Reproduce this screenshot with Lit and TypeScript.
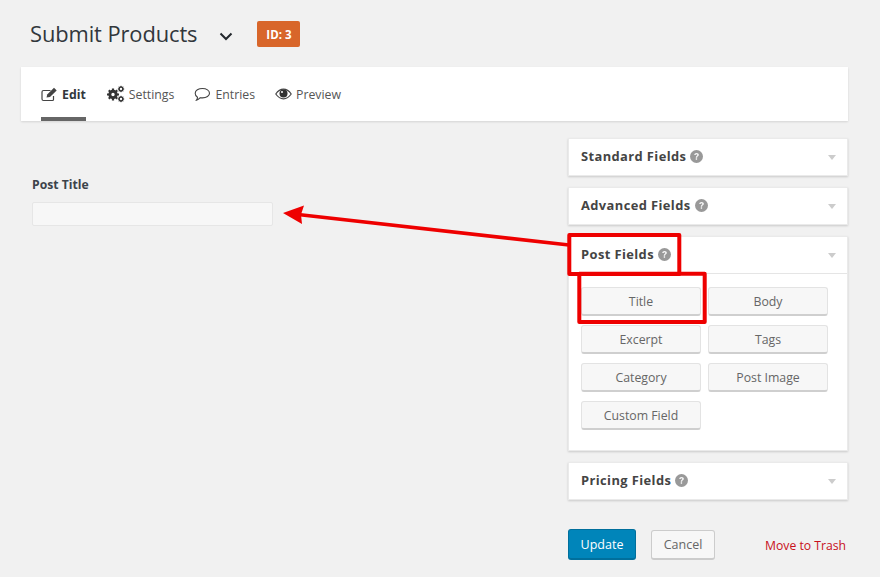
import { LitElement, html, css, svg } from "lit";
import { customElement } from "lit/decorators.js";

const help = svg`<svg class="help" viewBox="0 0 12 12" width="13" height="13"><circle cx="6" cy="6" r="6" fill="#999"/><path d="M3.900 4.700c0-1.300 1-2 2.150-2 1.200 0 2.100.7 2.100 1.750 0 1.500-1.600 1.400-1.600 2.650H5.300c0-1.800 1.450-1.700 1.450-2.550 0-.4-.3-.7-.75-.7-.5 0-.8.350-.8.850zM5.300 7.700h1.250v1.400H5.300z" fill="#f8f8f8"/></svg>`;

@customElement("app-root")
export class AppRoot extends LitElement {
  static styles = css`
    :host { display: block; width: 880px; height: 577px; position: relative; overflow: hidden; background: #f1f1f1; font-family: "Open Sans", "Noto Sans", sans-serif; color: #444; }
    .header { display: flex; align-items: center; height: 67px; padding: 0 0 0 30px; box-sizing: border-box; }
    h1 { margin: 0; font-size: 21.900px; font-weight: 400; color: #32373c; line-height: 30px; letter-spacing: -0.1px; }
    .chev { margin-left: 22px; margin-top: 5px; }
    .badge { margin-left: 24px; background: #d8662a; color: #fff; font-size: 11.500px; font-weight: 700; border-radius: 2px; width: 43px; height: 26px; display: flex; align-items: center; justify-content: center; margin-top: 1px; box-sizing: border-box; }
    .tabs { margin: 0 32px 0 21px; height: 54px; background: #fff; box-shadow: 0 1px 2px rgba(0,0,0,.12); display: flex; padding-left: 20px; gap: 20px; box-sizing: border-box; }
    .tab { display: flex; align-items: center; gap: 4px; height: 54px; box-sizing: border-box; padding-bottom: 0; font-size: 12.300px; color: #555; }
    .tab.on { font-weight: 700; color: #32373c; border-bottom: 4px solid #666; padding-top: 4px; }
    .body { display: flex; justify-content: space-between; padding: 17px 32px 0 32px; }
    .form { width: 241px; padding-top: 39px; }
    .label { font-size: 12.200px; font-weight: 700; color: #3c434a; line-height: 16px; }
    .input { margin-top: 9px; height: 24px; background: #f7f7f7; border: 1px solid #e6e6e6; border-radius: 2px; box-sizing: border-box; }
    .side { width: 280px; margin-left: auto; display: flex; flex-direction: column; gap: 11px; }
    .panel { background: #fff; box-shadow: 0 1px 2px rgba(0,0,0,.16); border: 1px solid #eaeaea; box-sizing: border-box; }
    .phead { height: 36px; display: flex; align-items: center; padding-left: 12px; padding-right: 11px; font-size: 12.900px; letter-spacing: .4px; font-weight: 700; color: #444; gap: 4px; box-sizing: border-box; }
    .phead > span { position: relative; top: -1px; }
    .open .phead { border-bottom: 1px solid #e5e5e5; height: 37px; }
    .tri { margin-left: auto; width: 0; height: 0; border-left: 4.500px solid transparent; border-right: 4.500px solid transparent; border-top: 5px solid #ccc; }
    .help { flex: none; margin-top: -1px; }
    .grid { display: grid; grid-template-columns: 120px 120px; column-gap: 7px; row-gap: 9px; padding: 13px 12px 20px 12px; }
    .fbtn { height: 29px; background: #f7f7f7; border: 1px solid #e3e3e3; border-bottom: 2px solid #cfcfcf; border-radius: 3px; box-sizing: border-box; display: flex; align-items: center; justify-content: center; font-size: 12.300px; color: #666; }
    .actions { display: flex; align-items: center; margin-top: 18px; }
    .update { width: 68px; height: 31px; background: #0085ba; border: 1px solid #006f9c; border-bottom-width: 2px; border-radius: 3px; color: #fff; font-size: 12.500px; display: flex; align-items: center; justify-content: center; box-sizing: border-box; }
    .cancel { margin-left: 15px; width: 64px; height: 30px; background: #f7f7f7; border: 1px solid #ccc; border-bottom: 2px solid #ccc; border-radius: 3px; color: #666; font-size: 12.500px; display: flex; align-items: center; justify-content: center; box-sizing: border-box; }
    .trash { margin-left: auto; color: #c8101b; font-size: 12.200px; margin-top: 2px; margin-right: 2px; }
    .overlay { position: absolute; left: 0; top: 0; pointer-events: none; }
  `;

  render() {
    return html`
      <div class="header">
        <h1>Submit Products</h1>
        <svg class="chev" width="14" height="9" viewBox="0 0 14 9"><path d="M1.500 1.500 7 7l5.500-5.500" fill="none" stroke="#23282d" stroke-width="2"/></svg>
        <div class="badge">ID: 3</div>
      </div>
      <div class="tabs">
        <div class="tab on">
          <svg width="17" height="15" viewBox="0 0 17 15"><path d="M12.500 9v3.500a1 1 0 0 1-1 1h-9a1.500 1.500 0 0 1-1.500-1.500V5a1.500 1.500 0 0 1 1.500-1.500h7" fill="none" stroke="#444" stroke-width="1.200"/><path d="M5.500 10.500l.7-3L13 .8l2.700 2.700L9 10z" fill="#444"/></svg>
          <span>Edit</span>
        </div>
        <div class="tab">
          <svg width="19" height="18" viewBox="0 0 19 18"><g fill="none" stroke="#333"><circle cx="7" cy="9.500" r="3.200" stroke-width="3"/><path d="M7 3.500v2M7 13.500v2M1 9.500h2M11 9.500h2M2.800 5.300l1.400 1.400M9.800 12.300l1.400 1.400M2.800 13.700l1.400-1.400M9.800 6.700l1.400-1.400" stroke-width="2.200"/><circle cx="15" cy="4" r="1.900" stroke-width="1.500"/><path d="M15 .8v1M15 6.200v1M11.800 4h1M17.200 4h1M12.800 1.800l.7.7M16.500 5.500l.7.7M12.800 6.200l.7-.7M16.500 2.500l.7-.7" stroke-width="1"/><circle cx="15" cy="14" r="1.900" stroke-width="1.500"/><path d="M15 10.800v1M15 16.200v1M11.800 14h1M17.200 14h1M12.800 11.800l.7.7M16.500 15.500l.7.7M12.800 16.200l.7-.7M16.500 12.500l.7-.7" stroke-width="1"/></g></svg>
          <span>Settings</span>
        </div>
        <div class="tab">
          <svg width="17" height="15" viewBox="0 0 17 15"><path d="M8.500 1.500c4 0 7 2 7 4.700s-3 4.700-7 4.700c-.8 0-1.500-.1-2.200-.2C5.300 11.800 4 12.900 2.500 13.200c.6-.8 1-1.700 1-2.900C2 9.400 1.200 8 1.200 6.200 1.200 3.500 4.500 1.500 8.500 1.500z" fill="none" stroke="#444" stroke-width="1.100"/></svg>
          <span>Entries</span>
        </div>
        <div class="tab">
          <svg width="17" height="12" viewBox="0 0 17 12"><path d="M.8 6C3 2.800 5.500 1.200 8.500 1.200S14 2.800 16.200 6C14 9.200 11.500 10.800 8.500 10.800S3 9.200.8 6z" fill="none" stroke="#444" stroke-width="1.200"/><circle cx="8.500" cy="5.500" r="4" fill="#333"/><circle cx="7" cy="4" r="1" fill="#fff"/></svg>
          <span>Preview</span>
        </div>
      </div>
      <div class="body">
        <div class="form">
          <div class="label">Post Title</div>
          <div class="input"></div>
        </div>
        <div class="side">
          <div class="panel"><div class="phead"><span>Standard Fields</span>${help}<i class="tri"></i></div></div>
          <div class="panel"><div class="phead"><span>Advanced Fields</span>${help}<i class="tri"></i></div></div>
          <div class="panel open">
            <div class="phead"><span>Post Fields</span>${help}<i class="tri"></i></div>
            <div class="grid">
              ${["Title", "Body", "Excerpt", "Tags", "Category", "Post Image", "Custom Field"].map((t) => html`<div class="fbtn">${t}</div>`)}
            </div>
          </div>
          <div class="panel"><div class="phead"><span>Pricing Fields</span>${help}<i class="tri"></i></div></div>
          <div class="actions">
            <div class="update">Update</div>
            <div class="cancel">Cancel</div>
            <div class="trash">Move to Trash</div>
          </div>
        </div>
      </div>
      <svg class="overlay" width="880" height="577" viewBox="0 0 880 577">
        <g fill="none" stroke="#ee0000" stroke-width="4" stroke-linejoin="round">
          <rect x="569.300" y="235" width="110" height="39"/>
          <rect x="579.300" y="273.700" width="125.400" height="48.300"/>
          <path d="M569 245 298 214.500" stroke-width="3.600"/>
        </g>
        <path d="M283 213 304 205.500 301 214.500 302 224z" fill="#ee0000"/>
      </svg>
    `;
  }
}
